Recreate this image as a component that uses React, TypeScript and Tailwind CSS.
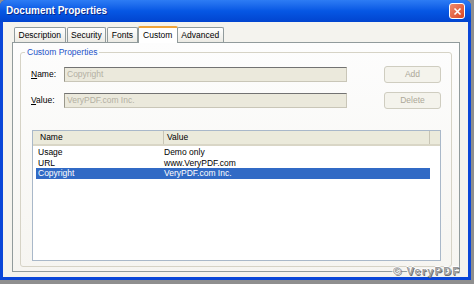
const tabs = ["Description", "Security", "Fonts", "Custom", "Advanced"];

const rows = [
  { name: "Usage", value: "Demo only" },
  { name: "URL", value: "www.VeryPDF.com" },
  { name: "Copyright", value: "VeryPDF.com Inc." },
];

function Field({ label, value }: { label: string; value: string }) {
  return (
    <div className="flex items-center">
      <span className="w-[33px] text-black">
        <span className="underline">{label[0]}</span>
        {label.slice(1)}:
      </span>
      <div className="w-[283px] h-[15px] flex items-center pl-[2px] bg-[#ebe9dc] border border-[#c9c6b8] border-t-[#727272] border-l-[#9a988c] text-[#b3b0a3]">
        {value}
      </div>
    </div>
  );
}

function Btn({ children }: { children: string }) {
  return (
    <div className="w-[57px] h-[17px] flex items-center justify-center rounded-[3px] border border-[#cfcdc0] bg-[#f4f3ec] text-[#aca899]">
      {children}
    </div>
  );
}

export default function App() {
  return (
    <div
      className="w-[474px] h-[284px] bg-[#8f8f8f] text-[8.5px] leading-none relative overflow-hidden"
      style={{ fontFamily: '"Liberation Sans", Arial, sans-serif' }}
    >
      <div className="w-[471px] h-[280px] flex flex-col bg-[#0a46d8] rounded-t-[6px]">
        {/* title bar */}
        <div className="h-[22px] shrink-0 flex items-center justify-between pl-[6px] pr-[6px] rounded-t-[6px] bg-gradient-to-b from-[#2d7cf4] via-[#0657e4] to-[#0244cf]">
          <span className="text-white font-bold text-[10px] [text-shadow:1px_1px_0_#0a2a8a]">
            Document Properties
          </span>
          <div className="w-[16px] h-[16px] rounded-[3px] border border-white bg-gradient-to-br from-[#f08a6c] to-[#d9431f] flex items-center justify-center">
            <svg width="9" height="9" viewBox="0 0 9 9">
              <path d="M1.5 1.5 L7.5 7.5 M7.5 1.5 L1.5 7.5" stroke="white" strokeWidth="1.6" />
            </svg>
          </div>
        </div>

        {/* body */}
        <div className="flex-1 mx-[3px] mb-[3px] bg-[#f4f3ee] flex flex-col pl-[9px] pr-[8px] pt-[4px] pb-[5px]">
          <div className="flex items-end h-[16px] pl-[2px]">
            {tabs.map((t) => {
              const on = t === "Custom";
              return (
                <div
                  key={t}
                  className={
                    on
                      ? "h-[17px] -mb-px z-10 px-[4.5px] flex items-center bg-white border border-[#919b9c] border-b-0 border-t-2 border-t-[#f0a43a] rounded-t-[2px] -mx-[1px]"
                      : "h-[15px] px-[3.5px] flex items-center bg-gradient-to-b from-white to-[#ebeae4] border border-[#919b9c] border-b-0 rounded-t-[2px] mr-[1px]"
                  }
                >
                  {t}
                </div>
              );
            })}
          </div>

          {/* tab pane */}
          <div className="flex-1 border border-[#919b9c] bg-gradient-to-b from-[#fdfdfd] to-[#f6f5f1] px-[7px] pt-[9px] pb-[4px] flex flex-col">
            <div className="flex-1 relative border border-[#d6d3c6] rounded-[3px] pl-[10px] pr-[10px] pt-[13px] pb-[5px] flex flex-col">
              <span className="absolute -top-[5px] left-[4px] px-[2px] bg-[#fcfcfc] text-[#1d52c8]">
                Custom Properties
              </span>
              <div className="flex items-center justify-between">
                <Field label="Name" value="Copyright" />
                <Btn>Add</Btn>
              </div>
              <div className="flex items-center justify-between mt-[9px]">
                <Field label="Value" value="VeryPDF.com Inc." />
                <Btn>Delete</Btn>
              </div>

              {/* list */}
              <div className="mt-[21px] ml-[1px] flex-1 border border-[#a9b8c9] bg-white flex flex-col">
                <div className="h-[15px] flex bg-[#ebeadb] border-b-2 border-[#d9d6c6]">
                  <div className="w-[131px] pl-[7px] flex items-center border-r border-[#c8c5b5]">Name</div>
                  <div className="w-[266px] pl-[3px] flex items-center border-r border-[#c8c5b5]">Value</div>
                  <div className="flex-1" />
                </div>
                <div className="pl-[3px] pt-[1px]">
                  {rows.map((r) => {
                    const sel = r.name === "Copyright";
                    return (
                      <div
                        key={r.name}
                        className={`w-[394px] h-[10.5px] flex items-center ${
                          sel ? "bg-[#316ac5] text-white" : "text-black"
                        }`}
                      >
                        <span className="w-[128px] pl-[2px]">{r.name}</span>
                        <span>{r.value}</span>
                      </div>
                    );
                  })}
                </div>
              </div>
            </div>
          </div>
        </div>
      </div>

      <span className="absolute left-[393px] top-[266px] text-[11px] font-bold tracking-[1.2px] text-[#9a9a9a] [text-shadow:-1px_0_0_#fff,0_-1px_0_#fff,1px_1px_0_#6f6f6f]">
        © VeryPDF
      </span>
    </div>
  );
}
